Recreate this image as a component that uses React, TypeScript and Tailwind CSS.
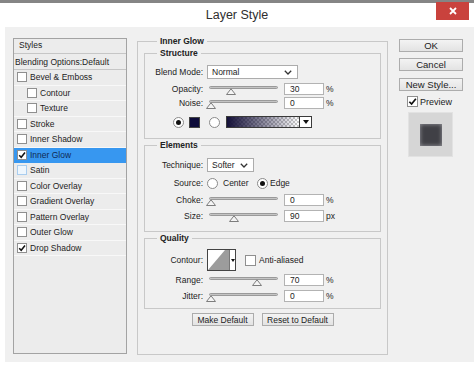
import React from "react";

type StyleItem = {
  label: string;
  checked?: boolean;
  indent?: boolean;
  selected?: boolean;
  hover?: boolean;
};

const styleItems: StyleItem[] = [
  { label: "Bevel & Emboss" },
  { label: "Contour", indent: true },
  { label: "Texture", indent: true },
  { label: "Stroke" },
  { label: "Inner Shadow" },
  { label: "Inner Glow", checked: true, selected: true },
  { label: "Satin", hover: true },
  { label: "Color Overlay" },
  { label: "Gradient Overlay" },
  { label: "Pattern Overlay" },
  { label: "Outer Glow" },
  { label: "Drop Shadow", checked: true },
];

function CheckBox({ checked, hover, size = 10 }: { checked?: boolean; hover?: boolean; size?: number }) {
  return (
    <span
      className={`flex shrink-0 items-center justify-center border ${
        hover ? "border-[#a9cdef] bg-[#eef6fd]" : "border-[#8f8f8f] bg-white"
      }`}
      style={{ width: size, height: size }}
    >
      {checked && (
        <svg width={size - 2} height={size - 2} viewBox="0 0 8 8">
          <path d="M1.2 4.2L3.2 6.3L7 1.5" fill="none" stroke="#111" strokeWidth="1.5" />
        </svg>
      )}
    </span>
  );
}

function Radio({ on }: { on?: boolean }) {
  return (
    <span className="flex h-[11px] w-[11px] shrink-0 items-center justify-center rounded-full border border-[#8a8a8a] bg-white">
      {on && <span className="h-[5px] w-[5px] rounded-full bg-[#111]" />}
    </span>
  );
}

function Chevron() {
  return (
    <svg width="8" height="5" viewBox="0 0 8 5">
      <path d="M0.8 0.8L4 4L7.2 0.8" fill="none" stroke="#333" strokeWidth="1.3" />
    </svg>
  );
}

function Select({ value, width }: { value: string; width: string }) {
  return (
    <div className={`flex h-[14px] items-center justify-between border border-[#acacac] bg-white pl-[4px] pr-[5px] ${width}`}>
      <span className="leading-[10px]">{value}</span>
      <Chevron />
    </div>
  );
}

function Slider({ value, max }: { value: number; max: number }) {
  const left = Math.round((value / max) * 65) - 3;
  return (
    <div className="relative ml-[2px] h-[12px] w-[69px]">
      <div className="mt-[3px] h-[3px] rounded-full border border-[#9a9a9a] bg-[#c4c4c4]" />
      <svg className="absolute top-[5px]" style={{ left }} width="10" height="7" viewBox="0 0 10 7">
        <polygon points="0.5,6.5 5,0.8 9.5,6.5" fill="#f4f4f4" stroke="#7d7d7d" strokeWidth="1" />
      </svg>
    </div>
  );
}

function Field({ value, unit }: { value: string; unit?: string }) {
  return (
    <>
      <div className="ml-[6px] flex h-[12px] w-[40px] items-center border border-[#b3b3b3] bg-white pl-[5px] leading-[10px]">
        {value}
      </div>
      {unit && <span className="ml-[2px] leading-[10px]">{unit}</span>}
    </>
  );
}

function Row({ label, className = "", children }: { label: string; className?: string; children: React.ReactNode }) {
  return (
    <div className={`flex items-center ${className}`}>
      <span className="w-[58px] text-right leading-[10px]">{label}</span>
      <div className="ml-[4px] flex items-center">{children}</div>
    </div>
  );
}

function Group({ title, className = "", children }: { title: string; className?: string; children: React.ReactNode }) {
  return (
    <fieldset className={`border border-[#c8c8c8] ${className}`}>
      <legend className="ml-[12px] px-[3px] font-bold leading-[12px] text-[#222]">{title}</legend>
      {children}
    </fieldset>
  );
}

function Button({ label, className = "" }: { label: string; className?: string }) {
  return (
    <div
      className={`flex h-[13px] items-center justify-center border border-[#acacac] bg-[linear-gradient(#f3f3f3,#e3e3e3)] leading-[10px] ${className}`}
    >
      {label}
    </div>
  );
}

function StylesPanel() {
  return (
    <div className="mt-[3px] flex h-[316px] w-[114px] shrink-0 flex-col border border-[#a3a3a3] bg-[#ececec]">
      <div className="flex h-[15px] items-center border-b border-[#c6c6c6] pb-[2px] pl-[5px] leading-[10px]">Styles</div>
      <div className="flex h-[16px] items-center border-b border-[#c6c6c6] pl-[1px] leading-[10px]">
        Blending Options:Default
      </div>
      {styleItems.map((item) => (
        <div
          key={item.label}
          className={`flex h-[15.5px] items-center gap-[3px] border-b ${
            item.selected ? "border-[#3797f0] bg-[#3797f0] text-[#0f2a55]" : "border-[#f8f8f8]"
          } ${item.indent ? "pl-[13px]" : "pl-[3px]"}`}
        >
          <CheckBox checked={item.checked} hover={item.hover} />
          <span className="leading-[10px]">{item.label}</span>
        </div>
      ))}
    </div>
  );
}

function InnerGlow() {
  return (
    <fieldset className="ml-[10px] w-[251px] shrink-0 border border-[#c8c8c8] px-[6px] pb-[28px]">
      <legend className="ml-[13px] px-[3px] font-bold leading-[12px] text-[#222]">Inner Glow</legend>

      <Group title="Structure" className="pb-[10px]">
        <Row label="Blend Mode:" className="mt-[6px] h-[14px]">
          <Select value="Normal" width="w-[91px]" />
        </Row>
        <Row label="Opacity:" className="mt-[4px] h-[12px]">
          <Slider value={30} max={100} />
          <Field value="30" unit="%" />
        </Row>
        <Row label="Noise:" className="mt-[2px] h-[12px]">
          <Slider value={0} max={100} />
          <Field value="0" unit="%" />
        </Row>
        <div className="mt-[7px] flex h-[12px] items-center pl-[28px]">
          <Radio on />
          <span className="ml-[5px] h-[11px] w-[11px] border border-[#444] bg-[#0d0b3a]" />
          <span className="ml-[9px]">
            <Radio />
          </span>
          <div className="ml-[6px] flex h-[12px] w-[86px] border border-[#3a3a3a]">
            <div className="flex-1 bg-[linear-gradient(to_right,#141038,rgba(20,16,56,0)),conic-gradient(#c8c8c8_25%,#ffffff_0_50%,#c8c8c8_0_75%,#ffffff_0)] bg-[length:100%_100%,4px_4px]" />
            <div className="flex w-[12px] items-center justify-center border-l border-[#3a3a3a] bg-white">
              <svg width="6" height="4" viewBox="0 0 6 4">
                <polygon points="0,0 6,0 3,4" fill="#111" />
              </svg>
            </div>
          </div>
        </div>
      </Group>

      <Group title="Elements" className="pb-[9px]">
        <Row label="Technique:" className="mt-[7px] h-[14px]">
          <Select value="Softer" width="w-[47px]" />
        </Row>
        <Row label="Source:" className="mt-[5px] h-[12px]">
          <div className="flex w-[50px] items-center">
            <Radio />
            <span className="ml-[5px] leading-[10px]">Center</span>
          </div>
          <Radio on />
          <span className="ml-[2px] leading-[10px]">Edge</span>
        </Row>
        <Row label="Choke:" className="mt-[5px] h-[12px]">
          <Slider value={0} max={100} />
          <Field value="0" unit="%" />
        </Row>
        <Row label="Size:" className="mt-[4px] h-[12px]">
          <Slider value={90} max={250} />
          <Field value="90" unit="px" />
        </Row>
      </Group>

      <Group title="Quality" className="pb-[6px]">
        <Row label="Contour:" className="mt-[5px] h-[22px]">
          <div className="flex h-[22px] w-[29px] border border-[#444] bg-white">
            <svg width="21" height="20" viewBox="0 0 21 20">
              <polygon points="0,20 17,0 21,0 21,20" fill="#9c9c9c" />
            </svg>
            <div className="flex flex-1 items-center justify-center border-l border-[#777]">
              <svg width="4" height="3" viewBox="0 0 4 3">
                <polygon points="0,0 4,0 2,3" fill="#111" />
              </svg>
            </div>
          </div>
          <span className="ml-[9px]">
            <CheckBox size={11} />
          </span>
          <span className="ml-[3px] leading-[10px]">Anti-aliased</span>
        </Row>
        <Row label="Range:" className="mt-[3px] h-[12px]">
          <Slider value={70} max={100} />
          <Field value="70" unit="%" />
        </Row>
        <Row label="Jitter:" className="mt-[4px] h-[12px]">
          <Slider value={0} max={100} />
          <Field value="0" unit="%" />
        </Row>
      </Group>

      <div className="mt-[4px] flex justify-center gap-[8px]">
        <Button label="Make Default" className="w-[62px]" />
        <Button label="Reset to Default" className="w-[72px]" />
      </div>
    </fieldset>
  );
}

function SideButtons() {
  return (
    <div className="ml-[11px] mt-[4px] flex w-[64px] shrink-0 flex-col text-[9.5px]">
      <Button label="OK" className="border-[#63a3dc] bg-[linear-gradient(#f0f4f8,#e2e8ee)]" />
      <Button label="Cancel" className="mt-[6px]" />
      <Button label="New Style..." className="mt-[7px]" />
      <div className="mt-[5px] flex h-[11px] items-center pl-[8px] text-[9px]">
        <CheckBox checked size={11} />
        <span className="ml-[2px] leading-[10px]">Preview</span>
      </div>
      <div className="ml-[9px] mt-[5px] flex h-[45px] w-[45px] items-center justify-center border border-[#e2e2e2] bg-[#d6d6d6]">
        <div className="h-[22px] w-[22px] bg-[#404046] shadow-[inset_0_0_4px_#9c9ca2]" />
      </div>
    </div>
  );
}

export default function App() {
  return (
    <div className="h-[369px] w-[474px] overflow-hidden bg-white text-[#1c1c1c] [font-family:'Liberation_Sans',Arial,sans-serif]">
      <div className="h-[3px] bg-[#858585]" />
      <div className="grid h-[24px] grid-cols-[1fr_auto_1fr] items-start">
        <div />
        <div className="text-[12.5px] leading-[24px] text-[#2e2e2e]">Layer Style</div>
        <div className="flex justify-end pr-[5px]">
          <div className="-mt-[1px] flex h-[18px] w-[33px] items-center justify-center bg-[#c9423d]">
            <svg width="8" height="8" viewBox="0 0 8 8">
              <path d="M1 1L7 7M7 1L1 7" stroke="white" strokeWidth="1.8" />
            </svg>
          </div>
        </div>
      </div>
      <div className="ml-[5px] flex h-[335px] items-start bg-[#f0f0f0] pl-[8px] pt-[8px] text-[8.5px]">
        <StylesPanel />
        <InnerGlow />
        <SideButtons />
      </div>
    </div>
  );
}
